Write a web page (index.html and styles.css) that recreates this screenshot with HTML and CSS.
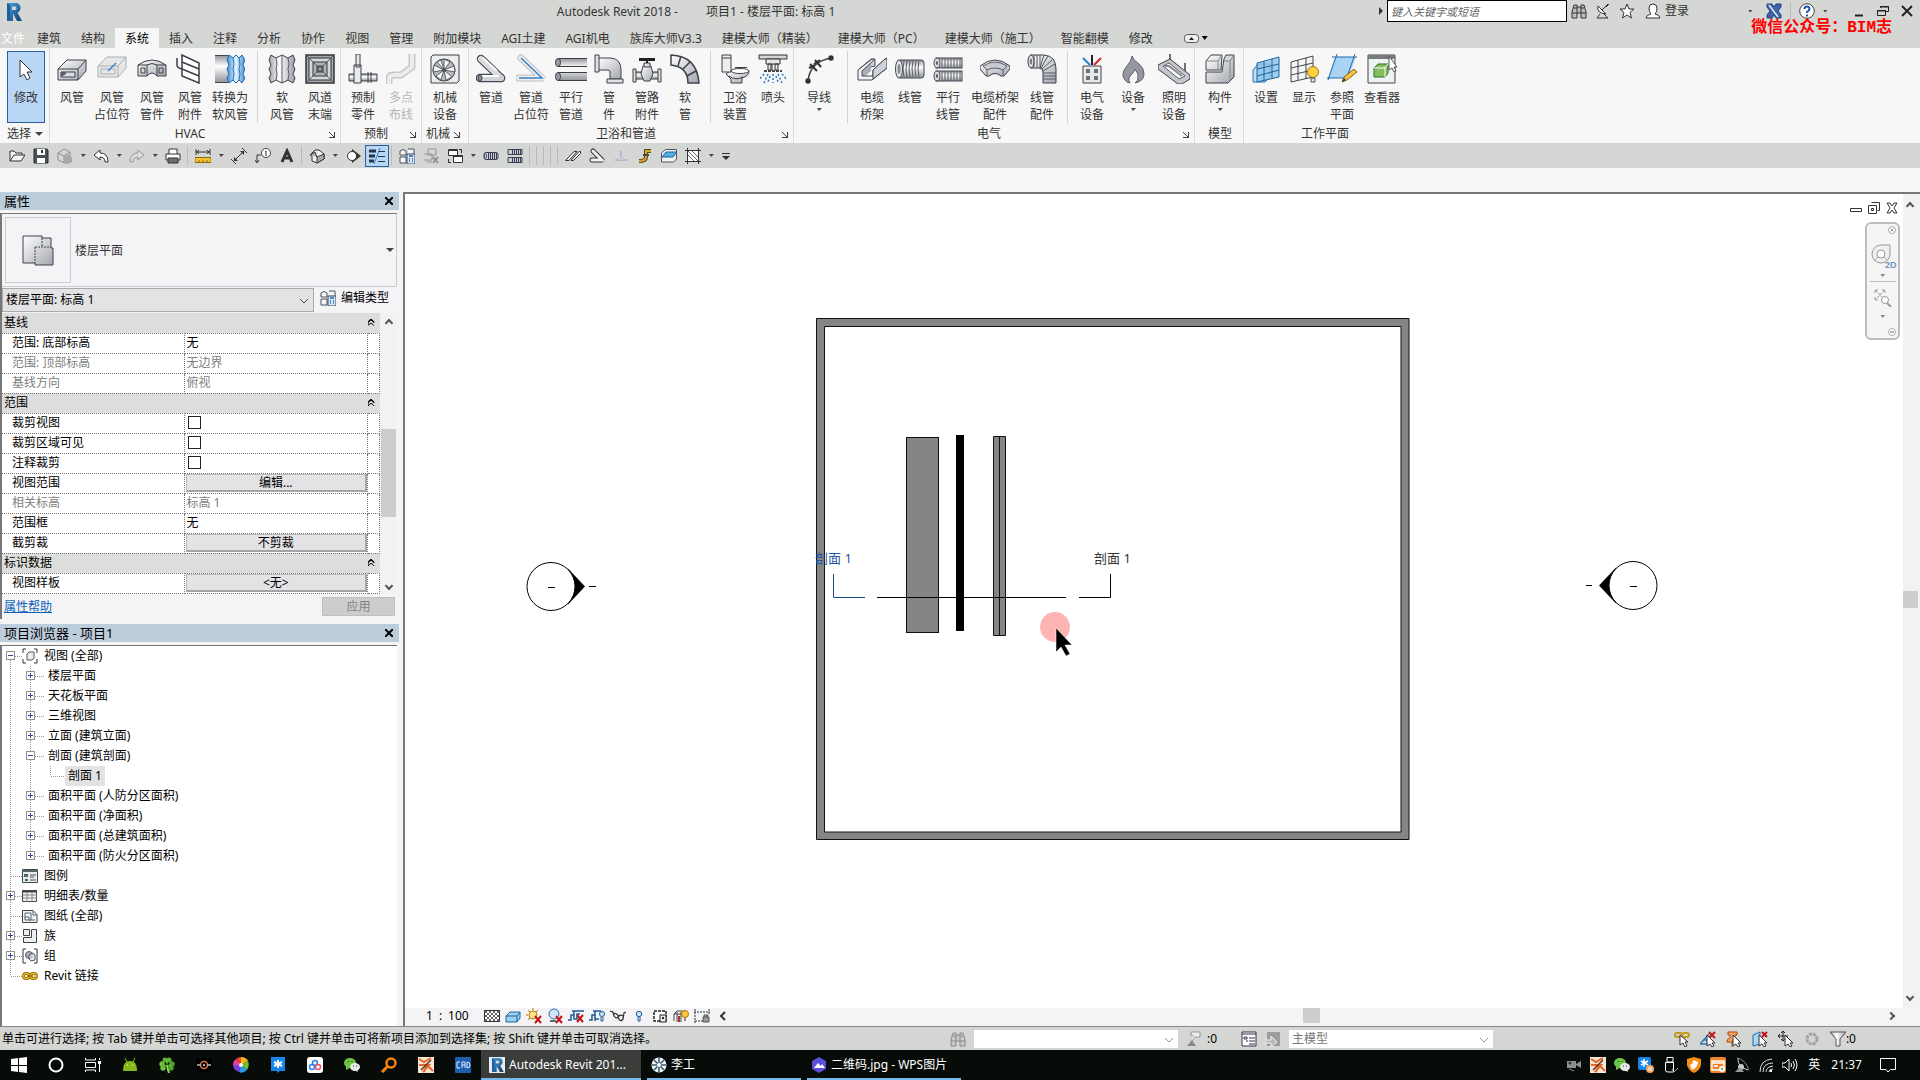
FILE: index.html
```html
<!DOCTYPE html>
<html lang="zh-CN">
<head>
    <meta charset="UTF-8">
    <meta name="viewport" content="width=device-width, initial-scale=1.0">
    <title>Autodesk Revit 2018 - 项目1 - 楼层平面: 标高 1</title>
    <link rel="stylesheet" href="styles.css">
</head>
<body>
    <svg class="defs" aria-hidden="true">
        <defs>
            <linearGradient id="gv" x1="0" y1="0" x2="0" y2="1"><stop offset="0" stop-color="#8d9097"/><stop offset=".4" stop-color="#fff"/><stop offset="1" stop-color="#8d9097"/></linearGradient>
            <linearGradient id="gh" x1="0" y1="0" x2="1" y2="0"><stop offset="0" stop-color="#a0a3a9"/><stop offset=".4" stop-color="#fff"/><stop offset="1" stop-color="#9a9da3"/></linearGradient>
            <linearGradient id="gd" x1="0" y1="0" x2="1" y2="1"><stop offset="0" stop-color="#fff"/><stop offset="1" stop-color="#a3a6ae"/></linearGradient>
            <linearGradient id="gb" x1="0" y1="0" x2="1" y2="0"><stop offset="0" stop-color="#3d8fd9"/><stop offset=".5" stop-color="#e8f5ff"/><stop offset="1" stop-color="#3d8fd9"/></linearGradient>
            <linearGradient id="gr" x1="0" y1="0" x2="1" y2="1"><stop offset="0" stop-color="#4ba0de"/><stop offset="1" stop-color="#123f6d"/></linearGradient>
        </defs>
        <symbol id="revit" viewBox="0 0 16 18"><path d="M1 0h8c4 0 5.500 2 5.500 5 0 2.500-1.300 4-3 4.600L16 18h-5L7 10.500V18H1z" fill="url(#gr)"/><path d="M6 3.500h2.500c1.300 0 2 .6 2 1.700S9.800 7 8.500 7H6z" fill="#d5d7d4"/><path d="M1 0l3 2v14l-3 2z" fill="#1c5f9e"/></symbol>
        <symbol id="pipe" viewBox="0 0 30 30"><path d="M5 5L25 24" stroke="#444852" stroke-width="8.500" stroke-linecap="round"/><path d="M4 24h21" stroke="#444852" stroke-width="8.500" stroke-linecap="round"/><path d="M5 5L25 24" stroke="#d9dbdf" stroke-width="6" stroke-linecap="round"/><path d="M4 24h21" stroke="#d0d2d7" stroke-width="6" stroke-linecap="round"/><path d="M5 22h18M7 4l14 13" stroke="#fff" stroke-width="2"/><ellipse cx="4" cy="24" rx="2" ry="3" fill="#888c95" stroke="#444852"/></symbol>
        <symbol id="conduit" viewBox="0 0 30 30"><rect x="2" y="6" width="27" height="18" rx="3" fill="url(#gv)" stroke="#444852"/><path d="M9 7q-2 8 0 16M12 7q-2 8 0 16M15 7q-2 8 0 16M18 7q-2 8 0 16M21 7q-2 8 0 16M24 7q-2 8 0 16" fill="none" stroke="#5b5f68"/><ellipse cx="4" cy="15" rx="3.500" ry="9" fill="#e4e5e8" stroke="#444852"/><ellipse cx="4" cy="15" rx="1.500" ry="5" fill="#888c95"/></symbol>
        <symbol id="conduit2" viewBox="0 0 30 30"><rect x="3" y="4" width="26" height="10" fill="url(#gv)" stroke="#444852"/><rect x="3" y="17" width="26" height="10" fill="url(#gv)" stroke="#444852"/><path d="M9 4v10M12 4v10M15 4v10M18 4v10M21 4v10M24 4v10M27 4v10M9 17v10M12 17v10M15 17v10M18 17v10M21 17v10M24 17v10M27 17v10" stroke="#5b5f68"/><ellipse cx="4" cy="9" rx="3" ry="5" fill="#ddd" stroke="#444852"/><ellipse cx="4" cy="22" rx="3" ry="5" fill="#ddd" stroke="#444852"/><ellipse cx="4" cy="9" rx="1" ry="2" fill="#555"/><ellipse cx="4" cy="22" rx="1" ry="2" fill="#555"/></symbol>
        <symbol id="conduit-s" viewBox="0 0 16 16"><rect x="1" y="4.500" width="14" height="7" rx="2" fill="#c9ccd4" stroke="#3a3e50"/><path d="M5.500 5v6M7.500 5v6M9.500 5v6M11.500 5v6M13.500 5v6" stroke="#3a3e50"/><ellipse cx="2.500" cy="8" rx="1" ry="2" fill="#fff" stroke="#3a3e50"/></symbol>
        <symbol id="conduit2-s" viewBox="0 0 16 16"><path d="M1 1.500h14v5H1zM1 9.500h14v5H1z" fill="#c9ccd4" stroke="#3a3e50"/><path d="M5.500 2v4M7.500 2v4M9.500 2v4M11.500 2v4M13.500 2v4M5.500 10v4M7.500 10v4M9.500 10v4M11.500 10v4M13.500 10v4" stroke="#3a3e50"/></symbol>
        <symbol id="tray" viewBox="0 0 30 30"><path d="M1 16L14 5h4v7z" fill="#cfd2d8" stroke="#444852"/><path d="M1 16l13-11v12L5 25z" fill="#a9adb7"/><path d="M1 16v10h14L30 14V4l-2 1-12 11v6H5v-5L17 6l-2-1z" fill="#f2f3f5" stroke="#444852"/><path d="M16 16L28 5l2 0v9L16 25z" fill="#cdd1d8" stroke="#444852"/></symbol>
        <symbol id="binoc" viewBox="0 0 16 16"><path d="M3 2h3v2h4V2h3l2 7v6h-5v-5H6v5H1V9z" fill="currentColor" fill-opacity=".15" stroke="currentColor"/><path d="M6 4v6M10 4v6M1 10h5M10 10h5M3 5h3M10 5h3" stroke="currentColor" fill="none"/></symbol>
        <symbol id="cur" viewBox="0 0 16 16"><path d="M7 4l8 8h-3l2 3-2 1-2-3-3 2z" fill="#fff" stroke="#333"/></symbol>
        <symbol id="typ" viewBox="0 0 16 16"><path d="M1 3q3-3 6 0v4H1zM9 1h6v6H9M1 9h6v6H1z" fill="#f3f5f7" stroke="#4c5260"/><rect x="8" y="6" width="8" height="10" fill="#dbe8f5" stroke="#33485f"/><path d="M10 8h4M10 11h1M13 11h1M10 13h1M13 13h1" stroke="#1c66aa" stroke-width="1.500"/></symbol>
        <symbol id="wechat" viewBox="0 0 16 16"><ellipse cx="6" cy="6" rx="6" ry="5" fill="#6cc644"/><path d="M2 9l0 4 4-2z" fill="#6cc644"/><ellipse cx="11" cy="10" rx="5" ry="4" fill="#e8ece8"/><path d="M13 12l1 3-4-2z" fill="#e8ece8"/><path d="M4 4.500h1M7.500 4.500h1M9 9h1M12 9h1" stroke="#234" stroke-width="1.200"/></symbol>
        <symbol id="bdraw" viewBox="0 0 16 16"><rect width="16" height="16" fill="#f7e6d3"/><path d="M1 2l5 3 7-4M1 8h10l-6 7M9 7l-3 8M10 9l5 5" stroke="#e2672a" stroke-width="2" fill="none"/><path d="M3 13L13 3" stroke="#532" stroke-width="1.500"/></symbol>
    </svg>

    <header class="titlebar">
        <svg class="logo" width="16" height="18"><use href="#revit"/></svg>
        <h1 class="app-title"><span>Autodesk Revit 2018 -</span><span>项目1 - 楼层平面: 标高 1</span></h1>
        <div class="infocenter">
            <i class="caret-right"></i>
            <input type="search" class="search" placeholder="键入关键字或短语" aria-label="搜索">
            <button class="tb" aria-label="查找"><svg width="16" height="16"><use href="#binoc"/></svg></button>
            <button class="tb" aria-label="通讯"><svg width="16" height="16" viewBox="0 0 16 16"><path d="M3 3q-2 7 8 8z" fill="#fff" stroke="#333"/><path d="M7 7l6-6M11 4l3-3M5 11l-3 4h11l-4-4" fill="none" stroke="#333"/></svg></button>
            <button class="tb" aria-label="收藏"><svg width="16" height="16" viewBox="0 0 16 16"><path d="M8 1l2 5h5l-4 3.500 1.500 5.500L8 12l-4.500 3L5 9.500 1 6h5z" fill="#fff" stroke="#333"/></svg></button>
            <button class="login"><svg width="16" height="16" viewBox="0 0 16 16"><path d="M1 15q0-3 5-4-2-2-2-6 0-4 4-4t4 4q0 4-2 6 5 1 5 4z" fill="#fff" stroke="#333"/></svg>登录</button>
            <i class="caret"></i>
            <button class="tb exchange" aria-label="Exchange"><svg width="16" height="16" viewBox="0 0 16 16"><path d="M1 1h5l2 3 2-3h5v3l-3 4 3 4v3h-5l-2-3-2 3H1v-3l3-4-3-4z" fill="#3f62a8" stroke="#23427e"/><path d="M3 2l9 12" stroke="#dfe9f7" stroke-width="1.500"/></svg></button>
            <i class="tb-sep"></i>
            <button class="tb" aria-label="帮助"><svg width="16" height="16" viewBox="0 0 16 16"><circle cx="8" cy="8" r="7.300" fill="#fff" stroke="#444"/><path d="M5.500 6q0-2.500 2.500-2.500T10.500 6q0 1.500-2.500 3v1" fill="none" stroke="#2356b4" stroke-width="2"/><path d="M8 11.500v2" stroke="#2356b4" stroke-width="2"/></svg></button>
            <i class="caret"></i>
            <button class="win first" aria-label="最小化"><svg width="12" height="12" viewBox="0 0 12 12"><path d="M2 10.500h8" stroke="#222" stroke-width="2"/></svg></button>
            <button class="win" aria-label="还原"><svg width="12" height="12" viewBox="0 0 12 12"><path d="M3.500 3V1.500h8v5H9M3 2h9M.5 5.500h8v5h-8zM0 6h9" fill="none" stroke="#222"/></svg></button>
            <button class="win" aria-label="关闭"><svg width="12" height="12" viewBox="0 0 12 12"><path d="M1 1l10 10M11 1L1 11" stroke="#222" stroke-width="2"/></svg></button>
        </div>
        <p class="watermark">微信公众号：BIM志</p>
    </header>

    <nav class="tabs">
        <a href="#" class="tab tab-file">文件</a>
        <a href="#" class="tab">建筑</a>
        <a href="#" class="tab">结构</a>
        <a href="#" class="tab active">系统</a>
        <a href="#" class="tab">插入</a>
        <a href="#" class="tab">注释</a>
        <a href="#" class="tab">分析</a>
        <a href="#" class="tab">协作</a>
        <a href="#" class="tab">视图</a>
        <a href="#" class="tab">管理</a>
        <a href="#" class="tab">附加模块</a>
        <a href="#" class="tab">AGI土建</a>
        <a href="#" class="tab">AGI机电</a>
        <a href="#" class="tab">族库大师V3.3</a>
        <a href="#" class="tab">建模大师（精装）</a>
        <a href="#" class="tab">建模大师（PC）</a>
        <a href="#" class="tab">建模大师（施工）</a>
        <a href="#" class="tab">智能翻模</a>
        <a href="#" class="tab">修改</a>
        <button class="tab-toggle" aria-label="最小化功能区"><svg width="15" height="9" viewBox="0 0 15 9"><rect x=".5" y=".5" width="14" height="8" rx="3" fill="#eee" stroke="#555"/><path d="M5 6l2.500-3L10 6z" fill="#222"/></svg><i class="caret dark"></i></button>
    </nav>

    <section class="ribbon">
        <div class="panel panel-select">
            <div class="tools"><button class="tool current"><svg width="30" height="30" viewBox="0 0 30 30"><path d="M9 6v17l4-3 3 6 3-2-3-6h5z" fill="#fff" stroke="#333"/></svg><span>修改</span></button></div>
            <div class="panel-name">选择<i class="caret big"></i></div>
        </div>
        <div class="panel">
            <div class="tools">
                <button class="tool"><svg width="30" height="30" viewBox="0 0 30 30"><path d="M1 15L10 6h19v11L21 26H1z" fill="url(#gd)" stroke="#3c4048"/><path d="M1 15h20v11M21 15l8-9" fill="none" stroke="#3c4048"/><path d="M4 18h14v5H4z" fill="#dcdde1" stroke="#3c4048"/><path d="M4 18h5v2l-5 3z" fill="#5a5e68"/></svg><span>风管</span></button>
                <button class="tool w42"><svg width="30" height="30" viewBox="0 0 30 30"><path d="M1 12L10 3h19v11L21 23H1z" fill="#e6e7e9" stroke="#aaadb2"/><path d="M1 12h20v11M21 12l8-9M4 15h14v5H4z" fill="none" stroke="#aaadb2"/><path d="M11 17l8-8" stroke="#3c83c8" stroke-width="1.500"/></svg><span>风管<br>占位符</span></button>
                <button class="tool"><svg width="30" height="30" viewBox="0 0 30 30"><path d="M1 11q14-10 28 0v11h-9q-5-6-10 0H1z" fill="url(#gd)" stroke="#3c4048"/><path d="M1 11h9q5-3 10 0h9M10 11v11M20 11v11M4 14h4v5H4zM22 14h4v5h-4z" fill="none" stroke="#3c4048"/></svg><span>风管<br>管件</span></button>
                <button class="tool"><svg width="30" height="30" viewBox="0 0 30 30"><path d="M7 1v21l17 7V9z" fill="#fff" stroke="#3c4048" stroke-width="1.500"/><path d="M7 8l17 7M7 15l17 7M2 4v7q0 3 5 4" fill="none" stroke="#3c4048" stroke-width="1.500"/></svg><span>风管<br>附件</span></button>
                <button class="tool w42"><svg width="30" height="30" viewBox="0 0 30 30"><rect x="0" y="1" width="14" height="28" fill="url(#gv)"/><path d="M0 1.500h13M0 28.500h13" stroke="#444"/><path d="M14 1l4 3 3-3 3 3 3-3 3 5-2 5 2 4-2 5 2 4-3 5-3-3-3 3-3-3-4 3-2-5 2-4-2-5 2-4-2-5z" fill="url(#gb)" stroke="#1f69ad"/><path d="M18 4l1 6-1 5 1 5-1 6M24 4l1 6-1 5 1 5-1 6" fill="none" stroke="#2876bd"/></svg><span>转换为<br>软风管</span></button>
                <i class="tool-sep"></i>
                <button class="tool"><svg width="30" height="30" viewBox="0 0 30 30"><path d="M4 1l5 3 6-3 6 3 5-3 2 5-2 5 2 4-2 5 2 4-2 5-5-3-6 3-6-3-5 3-2-5 2-4-2-5 2-4-2-5z" fill="url(#gh)" stroke="#3c4048"/><path d="M9 4l1 6-1 5 1 5-1 6M15 1v28M21 4l1 6-1 5 1 5-1 6" fill="none" stroke="#5b5f68"/></svg><span>软<br>风管</span></button>
                <button class="tool"><svg width="30" height="30" viewBox="0 0 30 30"><rect x="1" y="1" width="28" height="28" fill="#a2a7b1" stroke="#333" stroke-width="1.500"/><path d="M4 4h22v22H4z" fill="#d5d8de" stroke="#333"/><path d="M8 8h14v14H8z" fill="#b0b4bd" stroke="#333"/><path d="M12 12h6v6h-6z" fill="#e1e3e8" stroke="#333"/><path d="M1 1l28 28M29 1L1 29" stroke="#555"/><rect x="13" y="13" width="4" height="4" fill="#9aa" stroke="#333"/></svg><span>风道<br>末端</span></button>
            </div>
            <div class="panel-name has-launcher">HVAC<i class="launcher"></i></div>
        </div>
        <div class="panel">
            <div class="tools">
                <button class="tool"><svg width="30" height="30" viewBox="0 0 30 30"><path d="M1 20h28v7H1z" fill="url(#gv)" stroke="#3c4048"/><path d="M8 0h4v13H8zM6 11h7v18H6z" fill="#e9eaec" stroke="#3c4048"/><path d="M20 18v11M23 18v11" stroke="#3c4048"/></svg><span>预制<br>零件</span></button>
                <button class="tool off"><svg width="30" height="30" viewBox="0 0 30 30"><path d="M3 30v-5q0-4 5-4h7l11-8V0" fill="none" stroke="#c6c7c9" stroke-width="7"/><path d="M3 30v-5q0-4 5-4h7l11-8V0" fill="none" stroke="#ececed" stroke-width="4"/></svg><span>多点<br>布线</span></button>
            </div>
            <div class="panel-name has-launcher">预制<i class="launcher"></i></div>
        </div>
        <div class="panel panel-mech">
            <div class="tools">
                <button class="tool"><svg width="30" height="30" viewBox="0 0 30 30"><path d="M1 3l2-2h26v26l-2 2H1z" fill="#eceded" stroke="#3c4048"/><circle cx="14" cy="16" r="11" fill="#b7bac0" stroke="#3c4048"/><path d="M14 16V5l6 3zM14 16l10-4 1 6zM14 16l8 7-6 3zM14 16l-3 10-5-4zM14 16L3 18l1-7zM14 16L7 8l4-2z" fill="#f6f6f6" stroke="#5b5f68"/><circle cx="14" cy="16" r="2" fill="#555"/></svg><span>机械<br>设备</span></button>
            </div>
            <div class="panel-name">机械<i class="launcher"></i></div>
        </div>
        <div class="panel">
            <div class="tools">
                <button class="tool"><svg width="30" height="30"><use href="#pipe"/></svg><span>管道</span></button>
                <button class="tool w42"><svg width="30" height="30" viewBox="0 0 30 30"><path d="M5 4l21 20H3" stroke="#bcbfc3" stroke-width="7" fill="none" stroke-linecap="round" stroke-linejoin="round"/><path d="M5 4l21 20H3" stroke="#ededee" stroke-width="5" fill="none" stroke-linecap="round"/><path d="M5 4l21 20H3" stroke="#3c83c8" stroke-width="1.500" fill="none"/></svg><span>管道<br>占位符</span></button>
                <button class="tool"><svg width="32" height="30" viewBox="0 0 32 30"><path d="M3 4h29v9H3zM3 18h29v9H3z" fill="url(#gv)"/><path d="M3 4.500h29M3 12.500h29M3 18.500h29M3 26.500h29" stroke="#3c4048"/><ellipse cx="3" cy="8.500" rx="2.500" ry="4" fill="#999ca5" stroke="#3c4048"/><ellipse cx="3" cy="22.500" rx="2.500" ry="4" fill="#999ca5" stroke="#3c4048"/></svg><span>平行<br>管道</span></button>
                <button class="tool"><svg width="30" height="30" viewBox="0 0 30 30"><path d="M4 4h13q10 1 10 12v9h-11v-7q0-2-3-2H4z" fill="url(#gd)" stroke="#3c4048"/><path d="M1 1h4v17H1zM13 25h16v4H13z" fill="#e1e2e5" stroke="#3c4048"/></svg><span>管<br>件</span></button>
                <button class="tool"><svg width="30" height="30" viewBox="0 0 30 30"><path d="M3 18h24v7H3z" fill="url(#gv)" stroke="#3c4048"/><path d="M11 12h8l2 8-3 7h-6l-3-7z" fill="url(#gd)" stroke="#3c4048"/><path d="M1 15h3v13H1zM26 15h3v13h-3zM12 9h6v4h-6z" fill="#ddd" stroke="#3c4048"/><path d="M7 5.500h16" stroke="#222" stroke-width="3"/><path d="M15 5v4" stroke="#222" stroke-width="2"/></svg><span>管路<br>附件</span></button>
                <button class="tool"><svg width="30" height="30" viewBox="0 0 30 30"><path d="M1 1q26 1 28 28H18Q18 13 1 11z" fill="url(#gd)" stroke="#3c4048" stroke-width="1.500"/><path d="M11 2L8 12M20 8l-7 7M26 17l-9 5" stroke="#3c4048" stroke-width="1.500"/></svg><span>软<br>管</span></button>
                <i class="tool-sep"></i>
                <button class="tool"><svg width="30" height="30" viewBox="0 0 30 30"><path d="M10 17h19q0 5-7 7v5H11v-4l-5-5z" fill="url(#gd)" stroke="#3c4048"/><path d="M2 1h9v17H2z" fill="#eceded" stroke="#3c4048"/><path d="M2 4h9M9 22q7 5 14 1M15 13.500h12" fill="none" stroke="#3c4048"/><ellipse cx="20" cy="17" rx="9" ry="2.500" fill="#fff" stroke="#3c4048"/></svg><span>卫浴<br>装置</span></button>
                <button class="tool"><svg width="30" height="30" viewBox="0 0 30 30"><path d="M1 1h28v4H1z" fill="#d3d5d9" stroke="#333"/><path d="M8 5h14v5H8zM10 10h3v6h-3zM17 10h3v6h-3zM14 10v7" fill="#e6e7e9" stroke="#333"/><path d="M6 17h18" stroke="#444" stroke-width="2" stroke-dasharray="3 1"/><path d="M6 20L1 26M10 20l-4 9M15 20v9M20 20l4 9M24 20l5 6M12 22l-2 6M18 22l2 6" stroke="#2c79bb" stroke-width="1.500" stroke-dasharray="2 2"/></svg><span>喷头</span></button>
            </div>
            <div class="panel-name has-launcher">卫浴和管道<i class="launcher"></i></div>
        </div>
        <div class="panel">
            <div class="tools">
                <button class="tool w44"><svg width="30" height="30" viewBox="0 0 30 30"><path d="M4 27Q6 7 28 4" fill="none" stroke="#444" stroke-width="1.500"/><circle cx="4" cy="27" r="2.700" fill="#333"/><circle cx="27" cy="4" r="2.700" fill="#333"/><path d="M6 10l7 7M11 6l6 7M5 14l6-3M10 10l6-4" stroke="#333" stroke-width="2"/></svg><span>导线</span><i class="caret"></i></button>
                <i class="tool-sep"></i>
                <button class="tool"><svg width="30" height="30"><use href="#tray"/></svg><span>电缆<br>桥架</span></button>
                <button class="tool"><svg width="30" height="30"><use href="#conduit"/></svg><span>线管</span></button>
                <button class="tool"><svg width="30" height="30"><use href="#conduit2"/></svg><span>平行<br>线管</span></button>
                <button class="tool w56"><svg width="30" height="30" viewBox="0 0 30 30"><path d="M0 12q15-12 30 0v3l-6 7h-3q-6-5-12 0H6L0 15z" fill="url(#gd)" stroke="#3c4048"/><path d="M3 12q12-8 24 0l-4 4q-8-4-16 0z" fill="#c8cad0" stroke="#5b5f68"/><path d="M7 16v5M23 16v5" stroke="#5b5f68"/></svg><span>电缆桥架<br>配件</span></button>
                <button class="tool"><svg width="30" height="30" viewBox="0 0 30 30"><path d="M4 1h13q12 1 12 14v14H16V18q0-4-4-4H4z" fill="url(#gd)" stroke="#3c4048"/><path d="M7 1v13M10 1v13M13 1v13M17 1l-4 13M21 2l-7 12M25 6l-10 9M28 10l-12 7M16 19h13M16 22h13M16 25h13" stroke="#555963"/><ellipse cx="4" cy="7.500" rx="3" ry="6.500" fill="#dcdde0" stroke="#3c4048"/><ellipse cx="4" cy="7.500" rx="1.200" ry="3" fill="#777b84"/></svg><span>线管<br>配件</span></button>
                <i class="tool-sep"></i>
                <button class="tool"><svg width="30" height="30" viewBox="0 0 30 30"><path d="M6 12h18v17H6z" fill="#e7e8ea" stroke="#444"/><path d="M9 15h4v4H9zM17 15h4v4h-4zM9 22h4v4H9zM17 22h4v4h-4z" fill="#6c7078"/><path d="M6 4l7 7" stroke="#1f7fd4" stroke-width="2"/><path d="M15 1v10" stroke="#222" stroke-width="2"/><path d="M24 4l-7 7" stroke="#d4262a" stroke-width="2"/></svg><span>电气<br>设备</span></button>
                <button class="tool w44"><svg width="30" height="30" viewBox="0 0 30 30"><path d="M14 2q-1 6-5 10-7 8-2 14 2 3 5 3-3-5 2-9 2-2 3-5 4 5 3 9 0 3-3 5 9-2 9-9 0-6-5-10-6-4-7-8z" fill="#94979f" stroke="#5d6169"/></svg><span>设备</span><i class="caret"></i></button>
                <button class="tool"><svg width="32" height="30" viewBox="0 0 32 30"><path d="M12 0v6M27 9v9" stroke="#444" stroke-width="1.500"/><path d="M0 11l12-6 20 16v4l-8 5h-4L0 15z" fill="#c3c6cc" stroke="#3c4048"/><path d="M5 12l6-3 16 13-6 3z" fill="#f5f5f5" stroke="#5b5f68"/><path d="M7 12l4 0 13 10" fill="none" stroke="#888" stroke-width="2"/></svg><span>照明<br>设备</span></button>
            </div>
            <div class="panel-name has-launcher">电气<i class="launcher"></i></div>
        </div>
        <div class="panel">
            <div class="tools"><button class="tool w44"><svg width="30" height="30" viewBox="0 0 30 30"><path d="M1 7l5-6h11l-1 15H1zM1 18h16l2-13 2-4h8v22l-6 6H1z" fill="url(#gd)" stroke="#3c4048"/><path d="M19 7h6l4-6M25 7v19M1 7h12l4-6M13 7v9" fill="none" stroke="#82858c"/></svg><span>构件</span><i class="caret"></i></button></div>
            <div class="panel-name">模型</div>
        </div>
        <div class="panel panel-last">
            <div class="tools">
                <button class="tool"><svg width="30" height="30" viewBox="0 0 30 30"><path d="M2 16l5-6h12v13l-5 5H2z" fill="#c9ddf0" stroke="#2a6fa8"/><path d="M6 9l22-6v20L6 28z" fill="#8cc3ea" fill-opacity=".8" stroke="#1d659f"/><path d="M6 15l22-5M6 22l22-6M13 7v20M21 5v20" stroke="#1d659f"/></svg><span>设置</span></button>
                <button class="tool"><svg width="30" height="30" viewBox="0 0 30 30"><path d="M2 8l22-6v21L2 28z" fill="#f4f5f6" stroke="#444"/><path d="M2 14l22-5M2 21l22-5M9 6v20M17 4v21" stroke="#444"/><circle cx="24" cy="18" r="5.500" fill="#ffd33d" stroke="#9c7410"/><path d="M22 24h4v4h-4z" fill="#ddd" stroke="#555"/></svg><span>显示</span></button>
                <button class="tool"><svg width="30" height="30" viewBox="0 0 30 30"><path d="M8 3h21l-8 21H1z" fill="#a9d4f3"/><path d="M5 3h25M10 0L1 26M0 24h20M28 0l-7 20" stroke="#1f69ad" fill="none"/><path d="M15 28l2-5 10-8 3 3-10 8z" fill="#f2c14a" stroke="#8a6414"/><path d="M15 28l2-4 2 2z" fill="#333"/></svg><span>参照<br>平面</span></button>
                <button class="tool w42"><svg width="30" height="30" viewBox="0 0 30 30"><path d="M1 1h27v28H1z" fill="#edf2f5" stroke="#444"/><path d="M1 1h27v4H1z" fill="#777b80"/><path d="M7 14l4-4h10v9l-3 4H7z" fill="#85bd5f" stroke="#2b6d1c"/><path d="M18 13v10M7 14h11l3-4" stroke="#fff" fill="none"/><path d="M22 2v14l3-2 2 4 2-1-2-4h3z" fill="#fff" stroke="#555"/></svg><span>查看器</span></button>
            </div>
            <div class="panel-name">工作平面</div>
        </div>
    </section>

    <section class="qat">
        <button aria-label="打开"><svg viewBox="0 0 16 16"><path d="M1 13V3h4l2 2h6v2M1 13l4-6h11l-4 6z" fill="#f4f4f4" stroke="#333"/></svg></button>
        <button aria-label="保存"><svg viewBox="0 0 16 16"><path d="M1 1h13l1 1v13H1z" fill="#4a5057" stroke="#2b2e33"/><path d="M4 1h8v6H4zM4 10h8v5H4z" fill="#fff"/><path d="M9 2v3" stroke="#333" stroke-width="2"/></svg></button>
        <button aria-label="同步"><svg viewBox="0 0 16 16"><path d="M1 5l6-4 6 3v4l2 5-3 2-4 0-7-3z" fill="#d6d7d6" stroke="#8d8f8e"/><path d="M1 5l6 3 6-4M7 8v7" fill="none" stroke="#8d8f8e"/><circle cx="11" cy="11" r="4" fill="#a8aaa9"/></svg></button><i class="caret"></i>
        <button aria-label="放弃"><svg viewBox="0 0 16 16"><path d="M1 7l6-5v3q8 0 8 9h-3q0-5-5-5v3z" fill="#fff" stroke="#333"/></svg></button><i class="caret"></i>
        <button aria-label="重做"><svg viewBox="0 0 16 16"><path d="M15 7L9 2v3q-8 0-8 9h3q0-5 5-5v3z" fill="#ddd" stroke="#999"/></svg></button><i class="caret"></i>
        <button aria-label="打印"><svg viewBox="0 0 16 16"><path d="M4 6V1h8v5M1 6h14v6H1z" fill="#fff" stroke="#333"/><path d="M3 10h10v5H3z" fill="#6c7076" stroke="#333"/></svg></button>
        <i class="sep"></i>
        <button aria-label="测量"><svg viewBox="0 0 16 16"><path d="M1 4h14M1 1v6M15 1v6M4 2L2 4l2 2M12 2l2 2-2 2" stroke="#333" fill="none"/><path d="M0 9.500h16v5H0z" fill="#f2c230" stroke="#8a6a10"/><path d="M4 12v2M8 12v2M12 12v2" stroke="#8a6a10"/></svg></button><i class="caret"></i>
        <button aria-label="对齐尺寸标注"><svg viewBox="0 0 16 16"><path d="M3 13L13 3M0 11l5 5M11 0l5 5" stroke="#333"/><path d="M3 13V9l4 4zM13 3v4L9 3z" fill="#333"/></svg></button>
        <button aria-label="按类别标记"><svg viewBox="0 0 16 16"><circle cx="11" cy="5" r="4.500" fill="#fff" stroke="#444"/><path d="M10 4l1-1v5M6 7H2v7M0 12l2 3 2-3" fill="none" stroke="#333"/></svg></button>
        <button aria-label="文字"><svg viewBox="0 0 16 16"><path d="M3 14L8 3l5 11M5 10h6" fill="none" stroke="#333" stroke-width="3"/></svg></button>
        <i class="sep"></i>
        <button aria-label="默认三维视图"><svg viewBox="0 0 16 16"><path d="M1 7l5-5h4l5 4v5l-7 4-5-2V8z" fill="#f1f1f1" stroke="#333"/><path d="M8 9l7-3v5l-7 4zM1 7l5-3 2 5" fill="#a9adb3" stroke="#333"/></svg></button><i class="caret"></i>
        <button aria-label="剖面"><svg viewBox="0 0 16 16"><path d="M7 1l9 7-9 7z" fill="#333"/><circle cx="7" cy="8" r="4.500" fill="#fff" stroke="#333"/></svg></button>
        <button class="pressed" aria-label="细线"><svg viewBox="0 0 16 16"><path d="M0 3h7M0 8h6M0 13h5" stroke="#26364a" stroke-width="3"/><path d="M9 3.500h7M9 8.500h7M9 13.500h7" stroke="#26364a"/><path d="M5 16L11 0" stroke="#2a80d0"/></svg></button>
        <i class="sep"></i>
        <button aria-label="关闭隐藏窗口"><svg><use href="#typ"/></svg></button>
        <button aria-label="层叠"><svg viewBox="0 0 16 16"><path d="M5 1h8v6H5zM1 6h8v6H1M4 14h5" fill="none" stroke="#949694"/><path d="M10 9l5 6M15 9l-5 6" stroke="#949694" stroke-width="2"/></svg></button>
        <button aria-label="切换窗口"><svg viewBox="0 0 16 16"><path d="M1.500 1.500h9v6h-9zM6.500 7.500h9v7h-9z" fill="#fff" stroke="#333"/><path d="M1 2.500h9M6 8.500h9M12 1.500h2.500V5M4 14.500H1.500V11" fill="none" stroke="#333"/></svg></button><i class="caret"></i>
        <button aria-label="线管"><svg><use href="#conduit-s"/></svg></button>
        <button aria-label="平行线管"><svg><use href="#conduit2-s"/></svg></button>
        <i class="sep"></i><i class="sep"></i><i class="sep"></i><i class="sep"></i><i class="sep"></i>
        <button aria-label="电缆桥架"><svg viewBox="0 0 16 16"><path d="M.5 12.500L9 3.500h3L4 12.500zM6 12.500l8-9h1.500v2l-7 7z" fill="#f4f4f4" stroke="#333"/></svg></button>
        <button aria-label="管道"><svg viewBox="0 0 16 16"><path d="M4 3l9 9H3" fill="none" stroke="#333" stroke-width="5" stroke-linecap="round" stroke-linejoin="round"/><path d="M4 3l9 9H3" fill="none" stroke="#f0f0f0" stroke-width="3" stroke-linecap="round"/></svg></button>
        <button aria-label="末端"><svg viewBox="0 0 16 16"><path d="M2 11h12v2H2zM7 3h2v8H7z" fill="#b9b4c8"/><path d="M5 9h6v3H5z" fill="#cfcada"/></svg></button>
        <button aria-label="软管"><svg viewBox="0 0 16 16"><path d="M14 3H9v6q0 4-7 4" fill="none" stroke="#5e4a12" stroke-width="4"/><path d="M14 3H9v6q0 4-7 4" fill="none" stroke="#d3a632" stroke-width="2"/><path d="M6 7h6" stroke="#444" stroke-width="2"/></svg></button>
        <button aria-label="工作平面"><svg viewBox="0 0 16 16"><path d="M.5 14V5l4-3.500h11V11l-3 3z" fill="#eff3f6" stroke="#555"/><path d="M1 9l4-5h11l-4 5z" fill="#58aee0" stroke="#1b659e"/></svg></button>
        <button aria-label="区域"><svg viewBox="0 0 16 16"><path d="M3 3h10v10H3z" fill="#fff"/><path d="M2.500 0v16M13.500 0v16M0 2.500h16M0 13.500h16" stroke="#333"/><path d="M3 3l10 10M7 3l6 6M3 7l6 6" stroke="#666"/></svg></button><i class="caret"></i>
        <button class="more" aria-label="自定义"><svg viewBox="0 0 16 16"><path d="M4 5.500h8" stroke="#333"/><path d="M4 8h8l-4 4z" fill="#333"/></svg></button>
    </section>
    <div class="options-bar"></div>

    <main class="workspace">
        <aside class="docks">
            <section class="dock">
                <h2 class="dock-title">属性<button aria-label="关闭"><svg width="8" height="8" viewBox="0 0 8 8"><path d="M0 0l8 8M8 0L0 8" stroke="#000" stroke-width="2"/></svg></button></h2>
                <div class="dock-body">
                    <button class="type-selector">
                        <span class="type-thumb"><svg width="32" height="32" viewBox="0 0 32 32"><path d="M1 2h19v2h9v10h2v17H13v-2H1z" fill="url(#gd)" stroke="#3f434b"/><path d="M20 4v8M13 13h16M13 13v16" stroke="#3f434b" stroke-dasharray="2 1" fill="none"/></svg></span>
                        <span class="type-name">楼层平面</span><i class="caret big"></i>
                    </button>
                    <div class="filter">
                        <span class="combo"><select aria-label="属性过滤器"><option>楼层平面: 标高 1</option></select><svg width="10" height="6" viewBox="0 0 10 6"><path d="M1 1l4 4 4-4" fill="none" stroke="#444"/></svg></span>
                        <button class="edit-type"><svg width="16" height="16"><use href="#typ"/></svg>编辑类型</button>
                    </div>
                    <div class="grid-wrap">
                        <table class="props">
                            <tr class="group"><th colspan="2">基线</th><th><i class="fold"></i></th></tr>
                            <tr><td>范围: 底部标高</td><td>无</td><td></td></tr>
                            <tr class="off"><td>范围: 顶部标高</td><td>无边界</td><td></td></tr>
                            <tr class="off"><td>基线方向</td><td>俯视</td><td></td></tr>
                            <tr class="group"><th colspan="2">范围</th><th><i class="fold"></i></th></tr>
                            <tr><td><label for="crop">裁剪视图</label></td><td><input type="checkbox" id="crop"></td><td></td></tr>
                            <tr><td><label for="crop-visible">裁剪区域可见</label></td><td><input type="checkbox" id="crop-visible"></td><td></td></tr>
                            <tr><td><label for="crop-note">注释裁剪</label></td><td><input type="checkbox" id="crop-note"></td><td></td></tr>
                            <tr><td>视图范围</td><td class="has-btn"><button>编辑...</button></td><td></td></tr>
                            <tr class="off"><td>相关标高</td><td>标高 1</td><td></td></tr>
                            <tr><td>范围框</td><td>无</td><td></td></tr>
                            <tr><td>截剪裁</td><td class="has-btn"><button>不剪裁</button></td><td></td></tr>
                            <tr class="group"><th colspan="2">标识数据</th><th><i class="fold"></i></th></tr>
                            <tr><td>视图样板</td><td class="has-btn"><button>&lt;无&gt;</button></td><td></td></tr>
                        </table>
                        <div class="scroll"><i class="arrow up"></i><i class="thumb"></i><i class="arrow down"></i></div>
                    </div>
                    <div class="dock-foot"><a href="#">属性帮助</a><button disabled>应用</button></div>
                </div>
            </section>
            <section class="dock browser">
                <h2 class="dock-title">项目浏览器 - 项目1<button aria-label="关闭"><svg width="8" height="8" viewBox="0 0 8 8"><path d="M0 0l8 8M8 0L0 8" stroke="#000" stroke-width="2"/></svg></button></h2>
                <ul class="tree">
                    <li><i class="g first"><b class="box"></b></i><svg viewBox="0 0 16 16"><path d="M4 1H1v4M12 1h3v4M4 15H1v-4M12 15h3v-4" fill="none" stroke="#333"/><path d="M5 6l2-2h5v6l-2 2H5z" fill="#eee" stroke="#555"/></svg>视图 (全部)</li>
                    <li><i class="g v"></i><i class="g sub"><b class="box plus"></b></i>楼层平面</li>
                    <li><i class="g v"></i><i class="g sub"><b class="box plus"></b></i>天花板平面</li>
                    <li><i class="g v"></i><i class="g sub"><b class="box plus"></b></i>三维视图</li>
                    <li><i class="g v"></i><i class="g sub"><b class="box plus"></b></i>立面 (建筑立面)</li>
                    <li><i class="g v"></i><i class="g sub"><b class="box"></b></i>剖面 (建筑剖面)</li>
                    <li><i class="g v"></i><i class="g v"></i><i class="g sub last"></i><span class="picked">剖面 1</span></li>
                    <li><i class="g v"></i><i class="g sub"><b class="box plus"></b></i>面积平面 (人防分区面积)</li>
                    <li><i class="g v"></i><i class="g sub"><b class="box plus"></b></i>面积平面 (净面积)</li>
                    <li><i class="g v"></i><i class="g sub"><b class="box plus"></b></i>面积平面 (总建筑面积)</li>
                    <li><i class="g v"></i><i class="g sub last"><b class="box plus"></b></i>面积平面 (防火分区面积)</li>
                    <li><i class="g"></i><svg viewBox="0 0 16 16"><path d="M.5 1.500h15v13H.5z" fill="#e6eced" stroke="#3e4a4e"/><path d="M0 3h16" stroke="#566569" stroke-width="2"/><path d="M2 6h4v3H2zM3 11h3v2H3z" fill="#4e666c"/><path d="M8 7h6M8 9h4M8 12h6" stroke="#555"/></svg>图例</li>
                    <li><i class="g"><b class="box plus"></b></i><svg viewBox="0 0 16 16"><path d="M.5 2.500h14v11H.5z" fill="#f4f4f4" stroke="#444"/><path d="M0 3.500h15" stroke="#444" stroke-width="2"/><path d="M1 7h14M1 10h14M5 5v9M10 5v9" stroke="#888"/></svg>明细表/数量</li>
                    <li><i class="g"></i><svg viewBox="0 0 16 16"><path d="M.5 2.500H11l4 4v8H.5z" fill="#f0f3f4" stroke="#444"/><path d="M11 3v4h4M3 10V5h6v7H7v-3H3v3h10" fill="none" stroke="#567"/></svg>图纸 (全部)</li>
                    <li><i class="g"><b class="box plus"></b></i><svg viewBox="0 0 16 16"><path d="M1.500 1.500h6v6h-6zM9.500 1.500h5v13h-13v-5h8z" fill="#eef0f1" stroke="#444"/></svg>族</li>
                    <li><i class="g"><b class="box plus"></b></i><svg viewBox="0 0 16 16"><path d="M4 1H1v14h3M12 1h3v14h-3" fill="none" stroke="#333"/><circle cx="7" cy="7" r="3.500" fill="#aab5bd" stroke="#555"/><path d="M7 7l4-2 2 2v5l-4 1-2-2z" fill="#dde" fill-opacity=".7" stroke="#555"/></svg>组</li>
                    <li><i class="g last"></i><svg viewBox="0 0 16 16"><rect x="1.500" y="5.500" width="6" height="5" rx="2.500" fill="none" stroke="#a57a0c" stroke-width="3"/><rect x="8.500" y="5.500" width="6" height="5" rx="2.500" fill="none" stroke="#a57a0c" stroke-width="3"/><rect x="1.500" y="5.500" width="6" height="5" rx="2.500" fill="none" stroke="#f0c436"/><rect x="8.500" y="5.500" width="6" height="5" rx="2.500" fill="none" stroke="#f0c436"/><path d="M5 8h6" stroke="#a57a0c" stroke-width="2"/></svg>Revit 链接</li>
                </ul>
            </section>
        </aside>

        <section class="view">
            <div class="view-main">
                <div class="canvas">
                    <svg class="drawing">
                        <g transform="translate(-405 -194)">
                            <path d="M816.500 318.500h592.500v521H816.500zM824.500 326.500v505.500h576.500V326.500z" fill="#858684" fill-rule="evenodd" stroke="#111"/>
                            <rect x="906.500" y="437.500" width="32" height="195" fill="#858684" stroke="#111"/>
                            <rect x="956" y="435" width="8" height="196"/>
                            <path d="M993.500 436.500h12v199h-12zM999.500 436v200" fill="#858684" stroke="#111"/>
                            <path d="M877 597.500h189M1079 597.500h31.500V574" fill="none" stroke="#000"/>
                            <path d="M833.500 574v23.500H865" fill="none" stroke="#1d4a86"/>
                            <text x="815" y="563" class="mark blue">剖面 1</text>
                            <text x="1094" y="563" class="mark">剖面 1</text>
                            <path d="M568 568.500l17 18-17 18z"/>
                            <circle cx="551" cy="586.500" r="24" fill="#fff" stroke="#000"/>
                            <path d="M548 587.500h7M589 586.500h7" stroke="#000"/>
                            <path d="M1616 567.500l-17 18 17 18z"/>
                            <circle cx="1633" cy="585.500" r="24" fill="#fff" stroke="#000"/>
                            <path d="M1630 586.500h7M1586 585.500h6" stroke="#000"/>
                            <circle cx="1055" cy="627" r="15" fill="#ffb4b4"/>
                            <path d="M1056 628v24l5-5 5 9 4-2-5-9h7z" stroke="#fff" stroke-width=".5"/>
                        </g>
                    </svg>
                    <div class="mdi">
                        <button aria-label="最小化视图"><svg width="12" height="12" viewBox="0 0 12 12"><path d="M.5 6.500h11v3H.5z" fill="#fff" stroke="#333"/></svg></button>
                        <button aria-label="还原视图"><svg width="12" height="12" viewBox="0 0 12 12"><path d="M3.500.5h8v8h-2M.5 3.500h8v8h-8zM3.500 6.500h2v2h-2z" fill="none" stroke="#333"/></svg></button>
                        <button aria-label="关闭视图"><svg width="12" height="12" viewBox="0 0 12 12"><path d="M1 1h3l2 3 2-3h3L8 6l3 5H8L6 8l-2 3H1l3-5z" fill="#fff" stroke="#333"/></svg></button>
                    </div>
                    <div class="navbar">
                        <button class="nav-x" aria-label="关闭导航栏"><svg width="8" height="8" viewBox="0 0 8 8"><circle cx="4" cy="4" r="3.500" fill="#fff" stroke="#aaa"/><path d="M2.500 2.500l3 3M5.500 2.500l-3 3" stroke="#999"/></svg></button>
                        <button class="wheel" aria-label="控制盘"><svg width="24" height="24" viewBox="0 0 24 24"><path d="M10 1h9v9a9 9 0 1 1-9-9z" fill="#efefef" stroke="#999"/><circle cx="10" cy="10" r="4" fill="#fff" stroke="#999"/><path d="M7 13l-4 4M13 13l3 3" stroke="#aaa"/></svg><span>2D</span></button>
                        <i class="caret pale"></i>
                        <i class="rule"></i>
                        <button aria-label="缩放"><svg width="18" height="18" viewBox="0 0 18 18"><path d="M1 1l10 10M11 1L1 11M1 4V1h3M8 1h3v3M1 8v3h3" fill="none" stroke="#999" stroke-dasharray="3 1"/><circle cx="11" cy="11" r="3.500" fill="#fff" stroke="#999"/><path d="M13 14l4 4" stroke="#999" stroke-width="2"/></svg></button>
                        <i class="caret pale"></i>
                        <button class="nav-x bottom" aria-label="导航栏选项"><svg width="8" height="8" viewBox="0 0 8 8"><circle cx="4" cy="4" r="3.500" fill="#fff" stroke="#aaa"/><path d="M2 4h4" stroke="#999" stroke-width="1.500"/></svg></button>
                    </div>
                </div>
                <div class="scroll vscroll"><i class="arrow up"></i><i class="thumb"></i><i class="arrow down"></i></div>
            </div>
            <div class="view-bar">
                <button class="scale"><span>1</span><span>:</span><span>100</span></button>
                <button aria-label="详细程度"><svg viewBox="0 0 16 16"><path d="M.5 2.500h15v11H.5z" fill="#fff" stroke="#333"/><path d="M1 4h14M1 8h14M1 12h14" stroke="#666" stroke-width="2" stroke-dasharray="2 2"/><path d="M3 6h12M3 10h12" stroke="#666" stroke-width="2" stroke-dasharray="2 2"/></svg></button>
                <button aria-label="视觉样式"><svg viewBox="0 0 16 16"><path d="M1 8l4-4h10v6l-3 4H1z" fill="#9fd0f2" stroke="#1d659f"/><path d="M1 8h11l3-4M12 8v6" fill="none" stroke="#1d659f"/></svg></button>
                <button aria-label="日光路径"><svg viewBox="0 0 16 16"><circle cx="7" cy="7" r="4" fill="#ffe28a" stroke="#b47c08"/><path d="M7 0v2M0 7h2M2 2l2 2M12 2l-2 2M2 12l2-2" stroke="#b47c08"/><path d="M9 8l6 7M15 8l-6 7" stroke="#c41212" stroke-width="2"/></svg></button>
                <button aria-label="阴影"><svg viewBox="0 0 16 16"><circle cx="7" cy="6" r="5" fill="#cfe4f5" stroke="#2f6ea6"/><path d="M3 13h6" stroke="#666" stroke-width="2"/><path d="M9 8l6 7M15 8l-6 7" stroke="#c41212" stroke-width="2"/></svg></button>
                <button aria-label="裁剪视图"><svg viewBox="0 0 16 16"><path d="M0 12h3V7h3M4 3h12M6 3v8h3V6h3" fill="none" stroke="#1d5a98" stroke-width="1.500"/><path d="M9 7l6 7M15 7l-6 7" stroke="#c41212" stroke-width="2"/></svg></button>
                <button aria-label="显示裁剪区域"><svg viewBox="0 0 16 16"><path d="M0 12h3V7h3M4 3h8M6 3v10M6 11h4" fill="none" stroke="#1d5a98" stroke-width="1.500"/><circle cx="13" cy="6" r="2.500" fill="#cde6fa" stroke="#1d5a98"/><path d="M12 9v4h2V9" fill="none" stroke="#1d5a98"/></svg></button>
                <button aria-label="临时隐藏"><svg viewBox="0 0 16 16"><path d="M0 3l3 1 1 4q2 3 4 1 2 6 5 2l1-6 2-1M4 6q2-2 5 3M8 9q2-3 5-1" fill="none" stroke="#333" stroke-width="1.300"/></svg></button>
                <button aria-label="显示隐藏图元"><svg viewBox="0 0 16 16"><circle cx="8" cy="6" r="2.700" fill="#cde6fa" stroke="#1d5a98"/><path d="M7 9v4h2V9" fill="none" stroke="#1d5a98"/></svg></button>
                <button aria-label="临时视图属性"><svg viewBox="0 0 16 16"><path d="M2 3h12v10H2z" fill="#fff" stroke="#222" stroke-width="1.500" stroke-dasharray="3 1"/><rect x="8" y="7" width="6" height="7" fill="#eee" stroke="#222"/><path d="M10 10h2" stroke="#222" stroke-width="2"/></svg></button>
                <button aria-label="分析模型"><svg viewBox="0 0 16 16"><path d="M1 13V6l3-3h9M1 6h10M4 4v10M8 4v10" fill="none" stroke="#444"/><path d="M6 8v6" stroke="#a33" stroke-width="2"/><circle cx="12" cy="6" r="3.500" fill="#ffc83a" stroke="#a97510"/><path d="M11 10h2v3h-2z" fill="#888"/></svg></button>
                <button aria-label="约束"><svg viewBox="0 0 16 16"><path d="M1 1v14M0 4h16M15 1v6M1 13h8" stroke="#333" stroke-dasharray="2 1"/><path d="M9 9h6v5H9zM10 9V7h4v2" fill="#999" stroke="#555"/></svg></button>
                <button aria-label="收起"><svg viewBox="0 0 16 16"><path d="M10 4L6 8l4 4" fill="none" stroke="#333" stroke-width="2"/></svg></button>
                <div class="hscroll"><i class="thumb"></i><i class="arrow right"></i></div>
            </div>
        </section>
    </main>

    <footer class="status">
        <p>单击可进行选择; 按 Tab 键并单击可选择其他项目; 按 Ctrl 键并单击可将新项目添加到选择集; 按 Shift 键并单击可取消选择。</p>
        <div class="status-mid">
            <svg class="dim" width="16" height="16"><use href="#binoc"/></svg>
            <span class="combo"><select aria-label="工作集" disabled><option></option></select><svg width="10" height="6" viewBox="0 0 10 6"><path d="M1 1l4 4 4-4" fill="none" stroke="#999"/></svg></span>
            <span class="count"><svg width="16" height="16" viewBox="0 0 16 16"><path d="M5 1h9v5H9l-3 4M5 1v4h3" fill="#eee" stroke="#999"/><path d="M1 15l5-6 4 6z" fill="#888"/></svg>:0</span>
            <svg class="opt" width="16" height="16" viewBox="0 0 16 16"><path d="M1 1h14v14H1z" fill="#fff" stroke="#335"/><path d="M1 3h14M3 6h3v2H3zM8 7h6M5 10h2M8 10h6M8 13h6" fill="none" stroke="#335"/></svg>
            <svg width="16" height="16" viewBox="0 0 16 16"><path d="M2 1h13v14H2z" fill="#9b9d9b"/><path d="M0 9h6V5l6 6-6 5v-4H0z" fill="#b8bab8" stroke="#eee"/></svg>
            <span class="combo"><select aria-label="设计选项" disabled><option>主模型</option></select><svg width="10" height="6" viewBox="0 0 10 6"><path d="M1 1l4 4 4-4" fill="none" stroke="#999"/></svg></span>
        </div>
        <div class="status-end">
            <button aria-label="选择链接"><svg viewBox="0 0 16 16"><rect x="1" y="2" width="7" height="4" rx="2" fill="none" stroke="#c89a1b" stroke-width="2"/><rect x="8" y="2" width="7" height="4" rx="2" fill="none" stroke="#c89a1b" stroke-width="2"/><path d="M6 4v10l3-2 2 4 2-1-2-4h3z" fill="#fff" stroke="#333"/></svg></button>
            <button aria-label="选择基线图元"><svg viewBox="0 0 16 16"><path d="M0 13l9-10M0 13h9M3 9h8" stroke="#2a79bb" stroke-width="1.500" fill="none"/><path d="M9 1l6 6M15 1L9 7" stroke="#c41212" stroke-width="2"/><use href="#cur"/></svg></button>
            <button aria-label="选择锁定图元"><svg viewBox="0 0 16 16"><path d="M2 1h9v3H9v3l3 2v2H1V9l3-2V4H2zM6 11v5" fill="#f4a460" stroke="#a44a14"/><use href="#cur"/></svg></button>
            <button aria-label="按面选择"><svg viewBox="0 0 16 16"><path d="M1 4l7-3v12l-7 2z" fill="#a9d4f3" stroke="#1f69ad"/><path d="M10 1l5 5M15 1l-5 5" stroke="#c41212" stroke-width="2"/><use href="#cur"/></svg></button>
            <button aria-label="选择时拖曳"><svg viewBox="0 0 16 16"><path d="M0 5h10M5 0v10M3 2l2-2 2 2M3 8l2 2 2-2M2 3L0 5l2 2" fill="none" stroke="#222"/><use href="#cur"/></svg></button>
            <button aria-label="后台进程"><svg viewBox="0 0 16 16"><circle cx="8" cy="8" r="5" fill="none" stroke="#a1a3a1" stroke-width="3" stroke-dasharray="3 1"/></svg></button>
            <button class="filter-count"><svg viewBox="0 0 16 16"><path d="M0 1h16l-6 7v7H6V8z" fill="url(#gh)" stroke="#555"/></svg>:0</button>
        </div>
    </footer>

    <footer class="taskbar">
        <button aria-label="开始"><svg viewBox="0 0 16 16"><path d="M0 2l7-1v7H0zM8 1l8-1v8H8zM0 9h7v6l-7-1zM8 9h8v7l-8-1z" fill="#fff"/></svg></button>
        <button aria-label="Cortana"><svg viewBox="0 0 16 16"><circle cx="8" cy="8" r="6.500" fill="none" stroke="#fff" stroke-width="2"/></svg></button>
        <button aria-label="任务视图"><svg viewBox="0 0 16 16"><path d="M.5 1v2h10V1M.5 5.500h10v5H.5zM.5 15v-2h10v2M14.500 1v2M14.500 7v8" fill="none" stroke="#fff"/><path d="M13 4h3v3h-3z" fill="#fff"/></svg></button>
        <button aria-label="Android"><svg viewBox="0 0 16 16"><path d="M1 13q0-9 7-9t7 9v1H1z" fill="#83b81a"/><path d="M3 1l2 4M13 1l-2 4" stroke="#83b81a"/><path d="M5 8h1M10 8h1" stroke="#fff"/></svg></button>
        <button aria-label="三叶草"><svg viewBox="0 0 16 16"><path d="M8 8q1 5 2 8" stroke="#9bd763" fill="none" stroke-width="2"/><circle cx="6" cy="3" r="2.500" fill="#5fb336"/><circle cx="10" cy="3" r="2.500" fill="#5fb336"/><circle cx="3" cy="7" r="2.700" fill="#6cbf40"/><circle cx="4" cy="11" r="2.700" fill="#6cbf40"/><circle cx="13" cy="7" r="2.700" fill="#4fa02b"/><circle cx="12" cy="11" r="2.700" fill="#4fa02b"/><path d="M6 3h4l-2 5 5-1-1 4-4-3-4 3-1-4 5 1z" fill="#5fb336"/></svg></button>
        <button aria-label="播放器"><svg viewBox="0 0 16 16"><path d="M0 1h16v14H0z" fill="#000"/><circle cx="8" cy="8" r="3.500" fill="none" stroke="#d4743c" stroke-width="1.500"/><path d="M1 8h4M11 8h4" stroke="#bbb" stroke-width="1.500"/><circle cx="8" cy="8" r="1" fill="#ddd"/></svg></button>
        <button aria-label="浏览器"><svg viewBox="0 0 16 16"><path d="M8 8V0q5 0 7 4z" fill="#f9b715"/><path d="M8 8l7-4q2 5-1 9z" fill="#6abf35"/><path d="M8 8l6 5q-4 4-8 2z" fill="#2a9ae8"/><path d="M8 8l-2 7q-6-2-6-7z" fill="#7b3fe0"/><path d="M8 8H0q0-4 3-6z" fill="#e53d9a"/><path d="M8 8L3 2q2-2 5-2z" fill="#f0442e"/><circle cx="8" cy="8" r="2" fill="#fff"/></svg></button>
        <button aria-label="笔记"><svg viewBox="0 0 16 16"><path d="M1 0h14v14h-5l-3 2v-2H1z" fill="#1684e8"/><path d="M8 3v8M4 5l8 4M12 5L4 9" stroke="#fff" stroke-width="2"/></svg></button>
        <button aria-label="网盘"><svg viewBox="0 0 16 16"><rect width="16" height="16" rx="3" fill="#fff"/><circle cx="8" cy="6" r="2.500" fill="none" stroke="#2b83e8" stroke-width="1.500"/><circle cx="5" cy="10" r="2.500" fill="none" stroke="#2b83e8" stroke-width="1.500"/><circle cx="11" cy="10" r="2.500" fill="none" stroke="#e5536a" stroke-width="1.500"/></svg></button>
        <button aria-label="微信"><svg><use href="#wechat"/></svg></button>
        <button aria-label="搜索"><svg viewBox="0 0 16 16"><circle cx="10" cy="6" r="4.500" fill="none" stroke="#f5830f" stroke-width="2.500"/><path d="M7 9l-6 6" stroke="#f5830f" stroke-width="3"/></svg></button>
        <button aria-label="画图"><svg><use href="#bdraw"/></svg></button>
        <button aria-label="CAD"><svg viewBox="0 0 16 16"><rect width="16" height="16" rx="1" fill="#1d5fae"/><path d="M5 5H2v6h3M7 11V5h3v6M7 8h3M12 5v6q3 0 3-3t-3-3" fill="none" stroke="#d8ecff"/></svg></button>
        <a href="#" class="task on"><svg viewBox="0 0 16 16"><rect width="16" height="16" fill="#e6ecf4"/><use href="#revit" x="2" y="1" width="13" height="14"/></svg><span>Autodesk Revit 201...</span></a>
        <a href="#" class="task"><svg viewBox="0 0 16 16"><circle cx="8" cy="8" r="7.500" fill="#eef4f8"/><path d="M8 1v14M1 8h14M3 3l10 10M13 3L3 13" stroke="#33566e" stroke-width="1.500"/><circle cx="8" cy="8" r="2" fill="#fff"/></svg><span>李工</span></a>
        <a href="#" class="task"><svg viewBox="0 0 16 16"><path d="M8 0l7 4v8l-7 4-7-4V4z" fill="#5a50d8"/><path d="M3 11l4-5 3 3 1-2 3 4z" fill="#fff"/></svg><span>二维码.jpg - WPS图片</span></a>
        <div class="tray">
            <button aria-label="录制"><svg viewBox="0 0 16 16"><path d="M1 4h9v7H1zM10 7l5-3v7l-5-3" fill="#8d8f8d"/><circle cx="4" cy="6" r="1.500" fill="#333"/><path d="M3 12l5 2" stroke="#888"/></svg></button>
            <button aria-label="画图"><svg><use href="#bdraw"/></svg></button>
            <button aria-label="微信"><svg><use href="#wechat"/></svg></button>
            <button aria-label="笔记"><svg viewBox="0 0 16 16"><rect width="13" height="13" rx="2" fill="#1684e8"/><path d="M6 2v8M3 4l7 4M10 4L3 8" stroke="#fff" stroke-width="1.500"/><circle cx="12" cy="12" r="4" fill="#f3a468"/><path d="M10 11h4M10 13h4" stroke="#fff"/></svg></button>
            <button aria-label="USB"><svg viewBox="0 0 16 16"><path d="M5 .5h6V5H5zM3.500 5.500h8V15H6q-2.500 0-2.500-2z" fill="none" stroke="#fff"/><path d="M10 12l2 3 4-4" fill="none" stroke="#aaa"/></svg></button>
            <button aria-label="安全"><svg viewBox="0 0 16 16"><path d="M1 2l7-2 7 2v6q-1 5-7 8-6-3-7-8z" fill="#f78c14"/><path d="M4 8q3-1 3-5l5 2q0 5-6 8z" fill="#fff"/></svg></button>
            <button aria-label="程序"><svg viewBox="0 0 16 16"><rect width="16" height="16" rx="2" fill="#f08228"/><path d="M2 4h12v9H2zM2 6h12M4 9h4" fill="none" stroke="#fff" stroke-width="1.500"/><circle cx="12" cy="12" r="3" fill="#fff"/><circle cx="12" cy="12" r="1" fill="#3a3"/></svg></button>
            <button aria-label="卫星"><svg viewBox="0 0 16 16"><path d="M4 1q-1 9 10 12" fill="none" stroke="#ccc"/><path d="M3 1q8 1 12 12" fill="none" stroke="#888"/><circle cx="7" cy="10" r="3" fill="#ccc"/><path d="M1 15l5-5 4 5z" fill="#999"/></svg></button>
            <button aria-label="网络"><svg viewBox="0 0 16 16"><path d="M2 15Q2 3 14 2M5 15q0-9 10-9M8 15q0-5 7-6M11 15q0-3 4-3" fill="none" stroke="#ddd"/><path d="M12 13h2v2h-2z" fill="#fff"/></svg></button>
            <button aria-label="音量"><svg viewBox="0 0 16 16"><path d="M0 6h3l4-4v12l-4-4H0zM9 6q1 2 0 4M11 4q3 4 0 8M13 2q4 6 0 12" fill="none" stroke="#fff"/></svg></button>
            <button>英</button>
            <time>21:37</time>
            <button class="notice" aria-label="通知"><svg viewBox="0 0 16 16"><path d="M.5 1.500h15v11h-5L8 15l-2-2.500H.5z" fill="none" stroke="#fff"/></svg></button>
        </div>
    </footer>
</body>
</html>
```

FILE: styles.css
```css
* {
    box-sizing: border-box;
}
body {
    margin: 0;
    height: 100vh;
    display: flex;
    flex-direction: column;
    overflow: hidden;
    background: #f7f7f7;
    color: #333;
    font: 12px/16px "Noto Sans", "Noto Sans CJK SC", sans-serif;
}
button, input, select {
    font: inherit;
    color: inherit;
    margin: 0;
    padding: 0;
    border: none;
    background: none;
    border-radius: 0;
}
svg {
    display: block;
    flex: none;
}
a {
    color: inherit;
    text-decoration: none;
}
.defs {
    position: absolute;
    width: 0;
    height: 0;
}
.caret {
    flex: none;
    width: 12px;
    height: 3px;
    background: #444;
    clip-path: polygon(4px 0, 9px 0, 6px 3px);
}
.caret.big {
    height: 4px;
    clip-path: polygon(2px 0, 10px 0, 6px 4px);
}
.caret.dark {
    background: #000;
    height: 4px;
    clip-path: polygon(3px 0, 9px 0, 6px 4px);
}
.caret.pale {
    background: #888;
}
.caret-right {
    width: 4px;
    height: 8px;
    background: #333;
    clip-path: polygon(0 0, 100% 50%, 0 100%);
}

/* title bar */
.titlebar {
    position: relative;
    flex: none;
    height: 28px;
    display: flex;
    background: #d5d7d4;
}
.logo {
    margin: 3px 0 0 6px;
}
.app-title {
    position: absolute;
    left: 29%;
    top: 4px;
    margin: 0;
    display: flex;
    gap: 28px;
    font-size: 12px;
    font-weight: normal;
}
.infocenter {
    margin-left: auto;
    padding-right: 1px;
    height: 22px;
    display: flex;
    align-items: center;
}
.search {
    width: 180px;
    height: 22px;
    margin: 0 0 0 4px;
    padding: 0 3px;
    border: 1px solid #000;
    background: #fff;
    font-size: 11px;
    font-style: italic;
}
.search::placeholder {
    color: #666;
}
.tb {
    width: 24px;
    height: 22px;
    display: flex;
    align-items: center;
    justify-content: center;
}
.exchange {
    margin-left: 6px;
}
.login {
    display: flex;
    align-items: center;
    gap: 4px;
    margin: 0 55px 0 6px;
}
.tb-sep {
    width: 1px;
    height: 18px;
    margin: 0 4px;
    background: #bbb;
}
.win {
    width: 24px;
    height: 22px;
    display: flex;
    align-items: center;
    justify-content: center;
}
.win.first {
    margin-left: 16px;
}
.watermark {
    position: absolute;
    right: 28px;
    top: 18px;
    z-index: 2;
    margin: 0;
    color: #f00;
    font: bold 16px/20px "Liberation Mono", "Noto Sans CJK SC", monospace;
}

/* ribbon */
.tabs {
    flex: none;
    height: 20px;
    display: flex;
    background: #d5d7d4;
}
.tab {
    padding: 0 10px;
    line-height: 21px;
    white-space: nowrap;
}
.tab-file {
    padding: 0 2px 0 1px;
    color: #fff;
}
.tab.active {
    background: #f7f7f7;
    color: #000;
}
.tab-toggle {
    display: flex;
    align-items: center;
    margin-left: 21px;
}
.ribbon {
    flex: none;
    height: 95px;
    display: flex;
    background: #f7f7f7;
}
.panel {
    display: flex;
    flex-direction: column;
    padding: 3px 1px 0 3px;
    border-right: 1px solid #d9dbdd;
}
.panel-select {
    padding: 3px 4px 0 7px;
}
.panel-mech {
    padding: 3px 4px 0;
}
.panel-last {
    border: none;
}
.tools {
    display: flex;
    height: 73px;
}
.tool {
    width: 38px;
    height: 72px;
    padding-top: 3px;
    display: flex;
    flex-direction: column;
    align-items: center;
    line-height: 17px;
    white-space: nowrap;
}
.tool span {
    margin-top: 5px;
}
.tool .caret {
    margin-top: 2px;
}
.tool.w42 {
    width: 42px;
}
.tool.w44 {
    width: 44px;
}
.tool.w56 {
    width: 56px;
}
.tool.current {
    padding-top: 2px;
    border: 1px solid #2a5f9e;
    background: #b9d6f5;
}
.tool.off {
    color: #b4b4b4;
}
.tool-sep {
    width: 1px;
    height: 72px;
    margin: 0 5px 0 6px;
    background: #d0d2d4;
}
.panel-name {
    position: relative;
    height: 19px;
    padding-top: 1px;
    display: flex;
    align-items: center;
    justify-content: center;
    white-space: nowrap;
}
.has-launcher {
    padding-right: 12px;
}
.panel-select .panel-name {
    justify-content: space-between;
}
.panel-mech .panel-name {
    justify-content: flex-start;
}
.launcher {
    position: absolute;
    right: 4px;
    top: 8px;
    width: 6px;
    height: 6px;
    border: solid #444;
    border-width: 0 1px 1px 0;
    background: linear-gradient(to top right, transparent 42%, #444 42%, #444 58%, transparent 58%);
}

/* quick access toolbar */
.qat {
    flex: none;
    height: 25px;
    padding-left: 5px;
    display: flex;
    align-items: center;
    background: #d5d7d4;
}
.qat button {
    width: 24px;
    height: 22px;
    display: flex;
    align-items: center;
    justify-content: center;
}
.qat svg {
    width: 16px;
    height: 16px;
}
.qat .pressed {
    border: 1px solid #2a5f9e;
    background: #b9d6f5;
}
.qat .more {
    width: 18px;
}
.sep {
    width: 1px;
    height: 19px;
    margin: 0 3px 0 2px;
    background: #b9bbb9;
}
.sep + .sep {
    margin-left: 3px;
}
.options-bar {
    flex: none;
    height: 24px;
}

/* docked palettes */
.workspace {
    flex: 1;
    min-height: 0;
    display: flex;
    gap: 4px;
    background: #f4f3f6;
}
.docks {
    flex: none;
    width: 399px;
    display: flex;
    flex-direction: column;
    gap: 5px;
    color: #000;
}
.browser {
    flex: 1;
    display: flex;
    flex-direction: column;
    min-height: 0;
}
.dock-title {
    margin: 0 0 3px;
    height: 18px;
    padding: 0 6px 0 4px;
    display: flex;
    align-items: center;
    justify-content: space-between;
    background: #bccddc;
    font-size: 13px;
    font-weight: normal;
}
.dock-body, .tree {
    margin: 0 2px 0 0;
    border: solid #777;
    border-width: 1px 0 0 2px;
    background: #f4f3f6;
}
.type-selector {
    width: 100%;
    height: 73px;
    padding: 3px 0 3px 3px;
    display: flex;
    align-items: center;
    border: 1px solid #cccbd0;
    border-width: 0 1px 1px 0;
    text-align: left;
}
.type-thumb {
    width: 66px;
    height: 66px;
    display: flex;
    align-items: center;
    justify-content: center;
    border: 1px solid #cccbd0;
}
.type-name {
    flex: 1;
    padding: 1px 0 0 4px;
    color: #333;
}
.filter {
    display: flex;
    height: 26px;
    align-items: flex-start;
    padding-top: 1px;
}
.combo {
    position: relative;
    display: block;
}
.combo select {
    appearance: none;
    width: 100%;
    height: 100%;
    padding: 0 3px;
    opacity: 1;
}
.combo svg {
    position: absolute;
    right: 4px;
    top: 40%;
    pointer-events: none;
}
.filter .combo {
    width: 312px;
    height: 24px;
    border: 1px solid #aaa;
    background: #e3e2e5;
}
.edit-type {
    height: 20px;
    display: flex;
    align-items: center;
    gap: 5px;
    margin-left: 6px;
}
.grid-wrap {
    display: flex;
}
.props {
    flex: 1;
    border-collapse: collapse;
    table-layout: fixed;
    background: #fff;
}
.props tr {
    height: 20px;
}
.props td {
    height: 20px;
    padding: 0 2px 2px;
    line-height: 17px;
    border: 1px dotted #777;
    border-left: none;
}
.props td:first-child {
    width: 182px;
    padding-left: 10px;
}
.props td:last-child {
    width: 12px;
}
.props .off td {
    color: #808080;
}
.props th {
    height: 20px;
    padding: 0 2px;
    background: #dcdedb;
    font-weight: normal;
    text-align: left;
    line-height: 18px;
}
.props th:last-child {
    padding: 0;
}
.props .has-btn {
    padding: 0 0 0 1px;
}
.has-btn button {
    display: block;
    width: 100%;
    height: 18px;
    line-height: 14px;
    border: 1px solid #bbb;
    border-right: 2px solid #a5a5a5;
    border-bottom: 2px solid #a5a5a5;
    background: #e3e2e5;
}
.props input {
    appearance: none;
    display: block;
    width: 13px;
    height: 13px;
    margin: 1px 0 0 1px;
    border: 1px solid #222;
    background: #fff;
}
.fold {
    display: block;
    width: 7px;
    height: 8px;
    background: #000;
    clip-path: polygon(0 3px, 3px 0, 4px 0, 7px 3px, 7px 4px, 6px 4px, 4px 2px, 3px 2px, 1px 4px, 1px 7px, 3px 5px, 4px 5px, 6px 7px, 7px 7px, 4px 4px, 3px 4px, 0 7px);
}
.scroll {
    width: 17px;
    display: flex;
    flex-direction: column;
    align-items: center;
    background: #f2f1f4;
}
.grid-wrap .scroll {
    padding: 7px 0 5px;
}
.grid-wrap .thumb {
    margin: 103px 0 auto;
    height: 88px;
}
.thumb {
    display: block;
    width: 15px;
    background: #cdcdcf;
}
.arrow {
    width: 6px;
    height: 6px;
    border: solid #555;
    border-width: 2px 0 0 2px;
    transform: rotate(45deg);
}
.arrow.down {
    transform: rotate(225deg);
}
.arrow.right {
    transform: rotate(135deg);
}
.dock-foot {
    height: 25px;
    padding: 1px 2px 0;
    display: flex;
    align-items: center;
    justify-content: space-between;
}
.dock-foot a {
    color: #0a62b8;
    text-decoration: underline;
}
.dock-foot button {
    width: 73px;
    height: 19px;
    border: 1px solid #bfbfbf;
    background: #cdcdcd;
    color: #838383;
}

/* project tree */
.tree {
    flex: 1;
    padding: 0;
    list-style: none;
    background: #fff;
}
.tree li {
    height: 20px;
    display: flex;
    align-items: center;
    white-space: nowrap;
}
.tree svg {
    width: 16px;
    height: 16px;
    margin-right: 6px;
}
/* guide cell: dotted trunk plus a dotted branch to the right */
.g {
    flex: none;
    width: 20px;
    height: 20px;
    display: flex;
    align-items: center;
    padding-left: 4px;
    background:
        repeating-linear-gradient(#999 0 1px, transparent 1px 2px) 8px 0 / 1px 20px no-repeat,
        repeating-linear-gradient(90deg, #999 0 1px, transparent 1px 2px) 9px 10px / 11px 1px no-repeat;
}
.g.v {
    background:
        repeating-linear-gradient(#999 0 1px, transparent 1px 2px) 8px 0 / 1px 20px no-repeat;
}
.g.first {
    background:
        repeating-linear-gradient(#999 0 1px, transparent 1px 2px) 8px 10px / 1px 10px no-repeat,
        repeating-linear-gradient(90deg, #999 0 1px, transparent 1px 2px) 9px 10px / 11px 1px no-repeat;
}
.g.last {
    background:
        repeating-linear-gradient(#999 0 1px, transparent 1px 2px) 8px 0 / 1px 10px no-repeat,
        repeating-linear-gradient(90deg, #999 0 1px, transparent 1px 2px) 9px 10px / 14px 1px no-repeat;
}
.g.sub {
    width: 26px;
    background-size: 1px 20px, 14px 1px;
}
.g.sub.last {
    width: 23px;
    background-size: 1px 10px, 14px 1px;
}
.g.sub.last:has(.box) {
    width: 26px;
}
.box {
    width: 9px;
    height: 9px;
    border: 1px solid #919191;
    background: linear-gradient(#36489c, #36489c) 1px 3px / 5px 1px no-repeat #fff;
}
.box.plus {
    background:
        linear-gradient(#36489c, #36489c) 1px 3px / 5px 1px no-repeat,
        linear-gradient(#36489c, #36489c) 3px 1px / 1px 5px no-repeat #fff;
}
.picked {
    height: 20px;
    padding: 0 3px;
    line-height: 19px;
    background: #e3e2e5;
}

/* drawing view */
.view {
    flex: 1;
    min-width: 0;
    display: flex;
    flex-direction: column;
    border: solid #777;
    border-width: 2px 0 0 2px;
}
.view-main {
    flex: 1;
    min-height: 0;
    display: flex;
}
.canvas {
    position: relative;
    flex: 1;
    background: #fff;
}
.drawing {
    width: 100%;
    height: 100%;
}
.mark {
    font: 13px "Noto Sans", "Noto Sans CJK SC", sans-serif;
    fill: #333;
}
.mark.blue {
    fill: #2457a8;
}
.mdi {
    position: absolute;
    right: 5px;
    top: 8px;
    display: flex;
    gap: 6px;
}
.navbar {
    position: absolute;
    right: 3px;
    top: 28px;
    width: 35px;
    height: 118px;
    padding: 2px;
    display: flex;
    flex-direction: column;
    align-items: center;
    border: 2px solid #bdbdbd;
    border-radius: 6px;
    background: #f5f5f5;
}
.nav-x {
    align-self: flex-end;
}
.nav-x.bottom {
    margin-top: auto;
}
.wheel {
    position: relative;
    margin: 10px 0 6px;
}
.wheel span {
    position: absolute;
    right: -2px;
    bottom: -2px;
    color: #6f93c4;
    font: bold 9px/10px "Liberation Sans", sans-serif;
}
.rule {
    width: 26px;
    height: 1px;
    margin: 4px 0 7px;
    background: #bbb;
}
.navbar .rule + button {
    margin-bottom: 8px;
}
.vscroll {
    justify-content: space-between;
    padding: 9px 3px 8px 0;
}
.vscroll .thumb {
    height: 17px;
    margin-bottom: 4px;
}
.view-bar {
    height: 18px;
    flex: none;
    display: flex;
    align-items: center;
    padding-bottom: 3px;
}
.view-bar button {
    width: 21px;
}
.view-bar svg {
    width: 16px;
    height: 16px;
}
.view-bar .scale {
    width: 58px;
    margin: 0 0 0 21px;
    display: flex;
    gap: 6px;
    color: #000;
}
.hscroll {
    flex: 1;
    display: flex;
    align-items: center;
    justify-content: space-between;
    padding: 0 26px 0 0;
}
.hscroll .thumb {
    margin-left: 49%;
    width: 17px;
    height: 15px;
}

/* status bar */
.status {
    flex: none;
    height: 24px;
    display: flex;
    align-items: center;
    border-top: 1px solid #888;
    background: #d4d6d3;
    color: #000;
}
.status p {
    width: 950px;
    margin: 0;
    padding-left: 2px;
    white-space: nowrap;
}
.status-mid {
    display: flex;
    align-items: center;
    gap: 8px;
}
.status .combo {
    width: 204px;
    height: 18px;
    background: #fff;
    color: #777;
    line-height: 18px;
}
.status select {
    display: block;
    color: #777;
}
.dim {
    color: #888;
}
.count {
    display: flex;
    gap: 5px;
    margin-right: 12px;
}
.opt {
    margin-left: 4px;
}
.status-end {
    margin-left: auto;
    padding-right: 64px;
    display: flex;
    gap: 10px;
}
.status-end svg {
    width: 16px;
    height: 16px;
}
.filter-count {
    display: flex;
}

/* windows taskbar */
.taskbar {
    flex: none;
    height: 30px;
    display: flex;
    background: #080c08;
    color: #fff;
}
.taskbar svg {
    width: 16px;
    height: 16px;
}
.taskbar button {
    width: 37px;
    display: flex;
    align-items: center;
    justify-content: center;
}
.task {
    width: 154px;
    margin-left: 6px;
    padding: 2px 4px 0;
    display: flex;
    align-items: center;
    gap: 4px;
    border-bottom: 2px solid #76b9ed;
    white-space: nowrap;
}
.task.on {
    width: 160px;
    margin: 0;
    padding-left: 8px;
    background: #3a3d3a;
}
.tray {
    margin-left: auto;
    padding-right: 3px;
    display: flex;
    align-items: center;
}
.tray button {
    width: 24px;
}
.tray time {
    margin: 0 10px 0 5px;
}
.tray .notice {
    width: 32px;
    height: 30px;
    margin-right: 13px;
}
```
